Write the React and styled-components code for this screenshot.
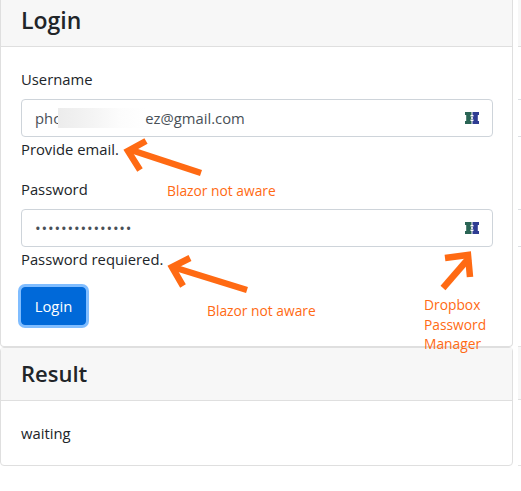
import React from "react";
import styled, { createGlobalStyle } from "styled-components";

const orange = "#ff6a13";

const GlobalStyle = createGlobalStyle`
  html, body {
    margin: 0;
    padding: 0;
    background: #fff;
    overflow: hidden;
  }
  * {
    box-sizing: border-box;
  }
  body {
    font-family: "Open Sans", "Noto Sans", sans-serif;
    color: #212529;
  }
`;

const Page = styled.div`
  position: relative;
  width: 521px;
  height: 491px;
  overflow: hidden;
  display: grid;
  grid-template-columns: 513px 120px;
  column-gap: 5px;
`;

const Column = styled.div`
  display: flex;
  flex-direction: column;
`;

const Card = styled.section`
  height: ${(p) => p.$height}px;
  background: #fff;
  border: 1px solid #dfdfdf;
  border-top-width: ${(p) => (p.$open ? 0 : 1)}px;
  border-radius: ${(p) => (p.$open ? "0 0 4px 4px" : "4px")};
`;

const SideCard = styled.section`
  height: ${(p) => p.$height}px;
  border-bottom: 1px solid #e4e4e4;
`;

const CardHeader = styled.header`
  height: ${(p) => p.$height}px;
  padding: 0 20px ${(p) => p.$lift}px;
  display: flex;
  align-items: center;
  background: #f7f7f7;
  border-bottom: 1px solid #dfdfdf;
`;

const Title = styled.h3`
  margin: 0;
  font-size: ${(p) => p.$size}px;
  font-weight: 600;
  color: #212529;
`;

const CardBody = styled.div`
  padding: 20px 19px 20px 20px;
`;

const SideBody = styled.div`
  padding-top: 52px;
  display: flex;
  flex-direction: column;
  gap: 72px;
`;

const SideField = styled.div`
  height: 38px;
  border-top: 1px solid #dcdfe3;
  border-bottom: 1px solid #dcdfe3;
`;

const Label = styled.label`
  display: block;
  font-size: 14.8px;
  line-height: 24px;
  margin-bottom: 8px;
`;

const InputBox = styled.div`
  height: 38px;
  padding: 0 13px;
  display: flex;
  align-items: center;
  justify-content: space-between;
  border: 1px solid #ced4da;
  border-radius: 4px;
  color: #495057;
  font-size: 14.8px;
`;

const InputValue = styled.span`
  display: flex;
  align-items: center;
`;

const Smudge = styled.span`
  width: 87px;
  height: 20px;
  margin-left: -2px;
  background:
    linear-gradient(90deg, #ececec 0, #f4f4f4 40%, #fcfcfc 70%, #fff 100%),
    #f4f4f4;
`;

const Dots = styled.span`
  font-size: 15px;
  letter-spacing: 0.85px;
`;

const Hint = styled.div`
  font-size: 14.8px;
  line-height: 24px;
  margin-bottom: ${(p) => p.$gap || 0}px;
`;

const LoginButton = styled.button`
  display: block;
  width: 65px;
  height: 38px;
  padding: 0;
  font: inherit;
  font-size: 14.8px;
  color: #fff;
  background: #0069d9;
  border: 1px solid #0069d9;
  border-radius: 4px;
  box-shadow: 0 0 0 3px #80bdff;
`;

const Note = styled.span`
  position: absolute;
  left: ${(p) => p.$x}px;
  top: ${(p) => p.$y}px;
  color: ${orange};
  font-size: 13.8px;
  line-height: 19.5px;
  white-space: pre-line;
`;

const Overlay = styled.svg`
  position: absolute;
  left: 0;
  top: 0;
  pointer-events: none;
`;

const VaultIcon = () => (
  <svg width="14" height="12" viewBox="0 0 14 12">
    <path d="M0 0h6.5v3h-1v6h1v3H0V9h1.2V3H0z" fill="#2a6555" />
    <path d="M7.5 0H14v3h-1.2v6H14v3H7.5V9h1V3h-1z" fill="#2f3c92" />
    <path d="M5 4.5h2v3H5z" fill="#2a6555" />
    <path d="M7 4.5h2v3H7z" fill="#2f3c92" />
    <circle cx="7" cy="6" r="1.1" fill="#fff" />
  </svg>
);

const Arrow = ({ shaft, head }) => (
  <>
    <path d={shaft} stroke={orange} strokeWidth="6.5" fill="none" />
    <path d={head} stroke={orange} strokeWidth="6.5" fill="none" />
  </>
);

export default function App() {
  return (
    <Page>
      <GlobalStyle />
      <Column>
        <Card $height={347} $open>
          <CardHeader $height={47} $lift={6}>
            <Title $size={23}>Login</Title>
          </CardHeader>
          <CardBody>
            <Label>Username</Label>
            <InputBox>
              <InputValue>
                phc
                <Smudge />
                ez@gmail.com
              </InputValue>
              <VaultIcon />
            </InputBox>
            <Hint $gap={16}>Provide email.</Hint>
            <Label>Password</Label>
            <InputBox>
              <Dots>•••••••••••••••</Dots>
              <VaultIcon />
            </InputBox>
            <Hint $gap={16}>Password requiered.</Hint>
            <LoginButton>Login</LoginButton>
          </CardBody>
        </Card>
        <Card $height={119}>
          <CardHeader $height={53} $lift={2}>
            <Title $size={22}>Result</Title>
          </CardHeader>
          <CardBody>
            <Hint>waiting</Hint>
          </CardBody>
        </Card>
      </Column>
      <Column>
        <SideCard $height={347}>
          <CardHeader $height={47} />
          <SideBody>
            <SideField />
            <SideField />
          </SideBody>
        </SideCard>
        <SideCard $height={119}>
          <CardHeader $height={53} />
        </SideCard>
      </Column>
      <Overlay width="521" height="491" viewBox="0 0 521 491">
        <Arrow shaft="M201 173L131 150" head="M146 141L128 151L140 170" />
        <Arrow shaft="M247 290L176 268" head="M190 258L172 267L183 286" />
        <Arrow shaft="M443 288L469 258" head="M445 258L468 255L470 277" />
      </Overlay>
      <Note $x={167} $y={181}>Blazor not aware</Note>
      <Note $x={207} $y={301}>Blazor not aware</Note>
      <Note $x={424} $y={295}>{"Dropbox\nPassword\nManager"}</Note>
    </Page>
  );
}
